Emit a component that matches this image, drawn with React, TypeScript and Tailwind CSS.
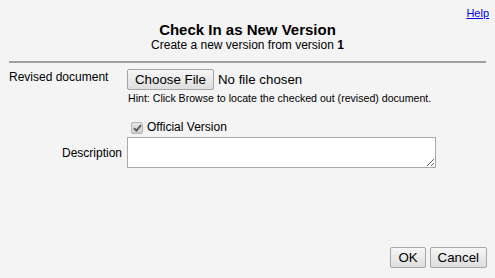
export default function App() {
  return (
    <div className="w-[495px] h-[278px] bg-[#f4f4f4] relative font-['Liberation_Sans',Arial,sans-serif] text-[12px] text-black overflow-hidden">
      <div className="flex justify-end pt-[7px] pr-[6px] h-[21px]">
        <a href="#" className="text-[11px] text-[#0000ee] underline leading-[13px]">Help</a>
      </div>
      <div className="text-center">
        <div className="text-[15px] font-bold leading-[17px]">Check In as New Version</div>
        <div className="text-[12px] leading-[15px]">
          Create a new version from version <b>1</b>
        </div>
      </div>
      <div className="mx-[9px] mt-[8px] h-[2px] bg-[#a0a0a0]"></div>

      <div className="flex mt-[6px]">
        <div className="w-[127px] pl-[9px] pt-[1px] leading-[15px]">Revised document</div>
        <div>
          <div className="flex items-center">
            <button className="h-[21px] px-[7px] border border-[#a6a6a6] rounded-[2px] bg-gradient-to-b from-[#f6f6f6] to-[#dedede] text-[13.3px] leading-[15px]">
              Choose File
            </button>
            <span className="ml-[4px] text-[13.3px] leading-[15px]">No file chosen</span>
          </div>
          <div className="text-[10.6px] leading-[13px] mt-[2px] ml-[1px]">
            Hint: Click Browse to locate the checked out (revised) document.
          </div>
        </div>
      </div>

      <div className="flex items-center ml-[131px] mt-[16px] h-[13px]">
        <span className="w-[12px] h-[12px] rounded-[2px] border border-[#b4b4b4] bg-gradient-to-b from-[#e6e6e6] to-[#d0d0d0] flex items-center justify-center">
          <svg width="9" height="8" viewBox="0 0 9 8">
            <path d="M1 4.2 L3.4 6.6 L8 1.2" fill="none" stroke="#555" strokeWidth="1.8" />
          </svg>
        </span>
        <span className="ml-[4px] text-[12px] leading-[15px]">Official Version</span>
      </div>

      <div className="flex items-start mt-[3px]">
        <div className="w-[127px] pr-[5px] text-right pt-[9px] leading-[15px]">Description</div>
        <textarea className="w-[309px] h-[31px] border border-[#a9a9a9] bg-white resize-y block"></textarea>
      </div>

      <div className="absolute right-[8px] bottom-[10px] flex gap-[4px]">
        <button className="h-[21px] px-[7px] border border-[#a6a6a6] rounded-[2px] bg-gradient-to-b from-[#f6f6f6] to-[#dedede] text-[13.3px] leading-[15px]">
          OK
        </button>
        <button className="h-[21px] px-[7px] border border-[#a6a6a6] rounded-[2px] bg-gradient-to-b from-[#f6f6f6] to-[#dedede] text-[13.3px] leading-[15px]">
          Cancel
        </button>
      </div>
    </div>
  );
}
